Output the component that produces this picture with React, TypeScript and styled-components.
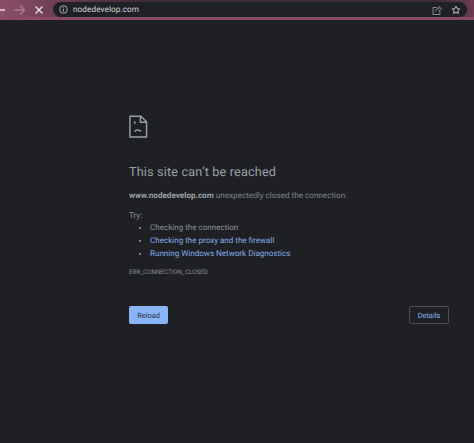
import React from "react";
import styled, { createGlobalStyle } from "styled-components";

const Global = createGlobalStyle`
  html, body { margin: 0; padding: 0; background: #1f2023; }
  #root { width: 474px; height: 443px; overflow: hidden; }
`;
const Page = styled.div`
  width: 474px; height: 443px; display: flex; flex-direction: column;
  background: #1f2023; font-family: "Roboto", "Liberation Sans", sans-serif; overflow: hidden;
  text-rendering: geometricPrecision;
`;
const Toolbar = styled.header`
  height: 20px; box-sizing: border-box; flex: none; display: flex; align-items: flex-start;
  padding-top: 2px;
  background: linear-gradient(90deg, #8a5068 0%, #6f4056 11%, #3c2a34 30%, #3c2a34 92%, #6a3d50 100%);
  border-bottom: 3px solid #8b4a63;
`;
const NavIcons = styled.div`
  display: flex; align-items: center; gap: 7px; height: 15px; margin-left: -7px; flex: none; width: 60px;
`;
const UrlBar = styled.div`
  flex: none; width: 414px; height: 15px;
  background: #1f2124; border-radius: 8px; display: flex; align-items: center;
  padding: 0 6px 0 6px; box-sizing: border-box; color: #c6c8cc;
`;
const Url = styled.span`
  font-size: 8.2px; color: #d4d6da; flex: 1; letter-spacing: 0.01em; margin-left: 5px; padding-top: 1px;
`;
const Main = styled.main`
  flex: 1; display: flex; flex-direction: column; padding: 95px 25px 0 129px; color: #9aa0a6;
`;
const SadTab = styled.svg`
  width: 19px; height: 23px; display: block; margin-bottom: 26px;
`;
const Title = styled.h1`
  margin: 0 0 7px; font-size: 12.7px; line-height: 18px; font-weight: 400; color: #9aa0a6; letter-spacing: 0.012em;
`;
const Message = styled.p`
  margin: 0 0 7px; font-size: 8.15px; line-height: 13px; color: #7f858b;
  b { font-weight: 700; color: #9aa0a6; }
`;
const TryLabel = styled.p`
  margin: 0; font-size: 8.1px; line-height: 12px; color: #8b9096;
`;
const List = styled.ul`
  margin: 1px 0 0; padding: 0 0 0 21px; font-size: 8.05px; line-height: 12.8px; color: #8b9096;
`;
const Item = styled.li<{ $link?: boolean }>`
  color: ${(p) => (p.$link ? "#85abea" : "#8b9096")};
  &::marker { color: #9aa0a6; }
`;
const Code = styled.div`
  margin-top: 7px; font-size: 6.25px; line-height: 10px; color: #8b9096;
`;
const Actions = styled.div`
  margin-top: 29px; display: flex; justify-content: space-between; align-items: center;
`;
const Button = styled.div<{ $primary?: boolean }>`
  height: 18px; box-sizing: border-box; border-radius: 2px;
  display: flex; align-items: center; justify-content: center; font-size: 7.4px;
  ${(p) => p.$primary
    ? "width: 39px; background: #8ab4f8; color: #2a3342;"
    : "width: 40px; border: 1px solid #4a4c50; color: #8ab4f8;"}
`;
const Ico = styled.svg`
  display: block; flex: none;
`;
const StarIcon = styled(Ico)`
  margin-left: 9px;
`;

export default function App() {
  return (
    <Page>
      <Global />
      <Toolbar>
        <NavIcons>
          <Ico width="13" height="14" viewBox="0 0 13 14" fill="none" stroke="#e6d9de" strokeWidth="1.3">
            <path d="M12 7H2M6 2.5 1.5 7 6 11.5" />
          </Ico>
          <Ico width="13" height="14" viewBox="0 0 13 14" fill="none" stroke="#a87f90" strokeWidth="1.3">
            <path d="M1 7h10M7 2.5 11.5 7 7 11.5" />
          </Ico>
          <Ico width="12" height="14" viewBox="0 0 12 14" fill="none" stroke="#f0e6ea" strokeWidth="1.3">
            <path d="M2.5 3.5l7 7M9.5 3.5l-7 7" />
          </Ico>
        </NavIcons>
        <UrlBar>
          <Ico width="9" height="9" viewBox="0 0 10 10" fill="none" stroke="#c6c8cc" strokeWidth="0.9">
            <circle cx="5" cy="5" r="4.2" />
            <path d="M5 4.4v3M5 2.6v1" />
          </Ico>
          <Url>nodedevelop.com</Url>
          <Ico width="10" height="10" viewBox="0 0 10 10" fill="none" stroke="#8f9296" strokeWidth="0.9">
            <path d="M5 2.5H1v7h7V7M3.5 6.5C3.8 4.5 5.2 3.4 7 3.4V1.4L9.6 4 7 6.4V4.8" />
          </Ico>
          <StarIcon width="10" height="10" viewBox="0 0 24 24" fill="none" stroke="#c4c6c9" strokeWidth="2.4">
            <path d="M12 3l2.8 5.8 6.2.9-4.5 4.4 1.1 6.3L12 17.4l-5.6 3 1.1-6.3L3 9.7l6.2-.9z" />
          </StarIcon>
        </UrlBar>
      </Toolbar>
      <Main>
        <SadTab viewBox="0 0 20 24" fill="none" stroke="#9aa0a6" strokeWidth="1.5">
          <path d="M1 1.2h11.5L18.5 7v16H1zM12 1.2V7.5h6.5" />
          <path d="M6 6.5v3" />
          <path d="M6 17.5c1-2.4 5-2.4 6.5 0" />
        </SadTab>
        <Title>This site can’t be reached</Title>
        <Message><b>www.nodedevelop.com</b> unexpectedly closed the connection.</Message>
        <TryLabel>Try:</TryLabel>
        <List>
          <Item>Checking the connection</Item>
          <Item $link>Checking the proxy and the firewall</Item>
          <Item $link>Running Windows Network Diagnostics</Item>
        </List>
        <Code>ERR_CONNECTION_CLOSED</Code>
        <Actions>
          <Button $primary>Reload</Button>
          <Button>Details</Button>
        </Actions>
      </Main>
    </Page>
  );
}
